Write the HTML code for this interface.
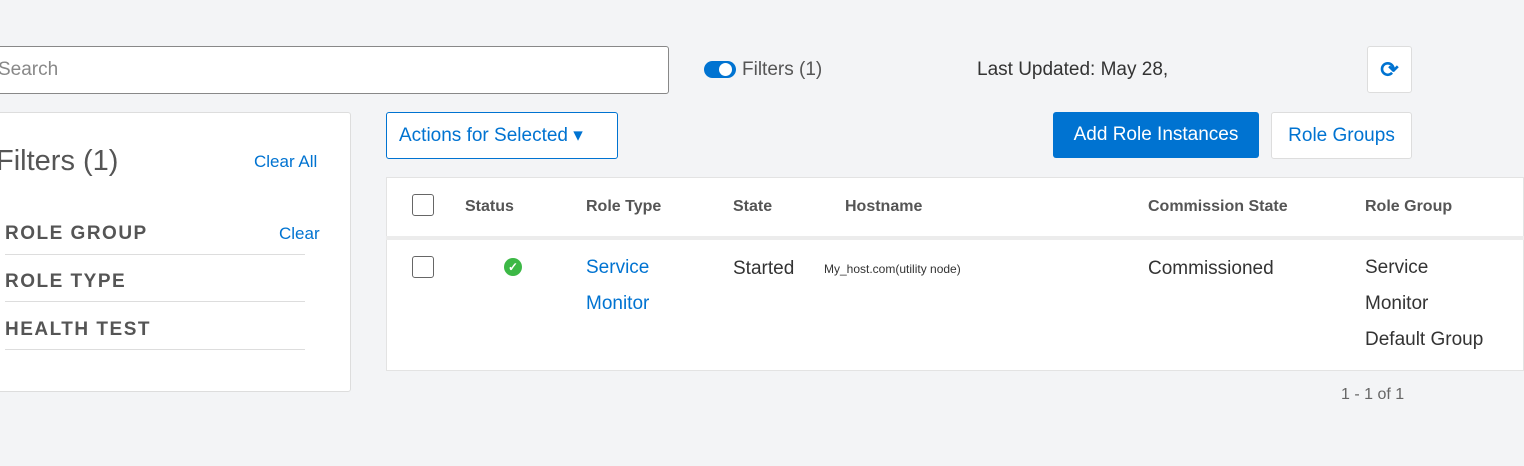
<!DOCTYPE html>
<html><head><style>
body{margin:0;width:1524px;height:466px;background:#f3f4f6;font-family:"Liberation Sans",sans-serif;position:relative;overflow:hidden;color:#333}
.a{position:absolute}
.blue{color:#0073d1}
.hd{font-size:16px;color:#555;font-weight:bold}
.cb{position:absolute;width:22px;height:22px;border:1.5px solid #666;border-radius:3px;background:#fff;box-sizing:border-box}
.fl{position:absolute;left:5px;font-size:19px;letter-spacing:1.5px;color:#555;font-weight:bold}
.ln{position:absolute;left:5px;width:300px;border-top:1px solid #ddd}
</style></head><body>
<div class="a" style="left:-5px;top:46px;width:672px;height:46px;border:1px solid #888;border-radius:3px;background:#fff"></div>
<div class="a" style="left:-2px;top:59px;font-size:19px;color:#888">Search</div>
<div class="a" style="left:704px;top:61px;width:32px;height:17px;border-radius:9px;background:#0073d1"></div>
<div class="a" style="left:719px;top:63px;width:13px;height:13px;border-radius:50%;background:#fff"></div>
<div class="a" style="left:742px;top:59px;font-size:19px;color:#555">Filters (1)</div>
<div class="a" style="left:977px;top:59px;font-size:19px;color:#333">Last Updated: May 28,</div>
<div class="a" style="left:1367px;top:46px;width:43px;height:45px;border:1px solid #ddd;border-radius:3px;background:#fff;color:#0073d1;font-size:22px;text-align:center;line-height:45px;font-weight:bold">⟳</div>
<div class="a" style="left:-5px;top:112px;width:354px;height:278px;border:1px solid #ddd;border-radius:3px;background:#fff"></div>
<div class="a" style="left:-4px;top:145px;font-size:29px;color:#555">Filters (1)</div>
<div class="a blue" style="left:254px;top:152px;font-size:17px">Clear All</div>
<div class="fl" style="top:223px">ROLE GROUP</div><div class="a blue" style="left:279px;top:224px;font-size:17px">Clear</div>
<div class="ln" style="top:254px"></div>
<div class="fl" style="top:271px">ROLE TYPE</div>
<div class="ln" style="top:301px"></div>
<div class="fl" style="top:319px">HEALTH TEST</div>
<div class="ln" style="top:349px"></div>
<div class="a" style="left:386px;top:112px;width:230px;height:45px;border:1px solid #0073d1;border-radius:3px;background:#fff"></div>
<div class="a blue" style="left:399px;top:124px;font-size:19px">Actions for Selected ▾</div>
<div class="a" style="left:1053px;top:112px;width:206px;height:46px;background:#0073d1;border-radius:3px;color:#fff;font-size:19px;text-align:center;line-height:46px">Add Role Instances</div>
<div class="a blue" style="left:1271px;top:112px;width:139px;height:45px;border:1px solid #ddd;border-radius:3px;background:#fff;font-size:19px;text-align:center;line-height:45px">Role Groups</div>
<div class="a" style="left:386px;top:177px;width:1136px;height:192px;background:#fff;border:1px solid #e3e3e3"></div>
<div class="a" style="left:386px;top:236px;width:1138px;height:4px;background:#ececec"></div>
<div class="cb" style="left:412px;top:194px"></div>
<div class="a hd" style="left:465px;top:198px">Status</div>
<div class="a hd" style="left:586px;top:198px">Role Type</div>
<div class="a hd" style="left:733px;top:198px">State</div>
<div class="a hd" style="left:845px;top:198px">Hostname</div>
<div class="a hd" style="left:1148px;top:198px">Commission State</div>
<div class="a hd" style="left:1365px;top:198px">Role Group</div>
<div class="cb" style="left:412px;top:256px"></div>
<div class="a" style="left:504px;top:258px;width:18px;height:18px;border-radius:50%;background:#3cb846;color:#fff;font-size:12px;text-align:center;line-height:18px;font-weight:bold">✓</div>
<div class="a blue" style="left:586px;top:250px;font-size:19px;line-height:36px">Service<br>Monitor</div>
<div class="a" style="left:733px;top:258px;font-size:19px">Started</div>
<div class="a" style="left:824px;top:262px;font-size:12px">My_host.com(utility node)</div>
<div class="a" style="left:1148px;top:258px;font-size:19px">Commissioned</div>
<div class="a" style="left:1365px;top:250px;font-size:19px;line-height:36px">Service<br>Monitor<br>Default Group</div>
<div class="a" style="left:1341px;top:386px;font-size:16px;color:#666">1 - 1 of 1</div>
</body></html>
